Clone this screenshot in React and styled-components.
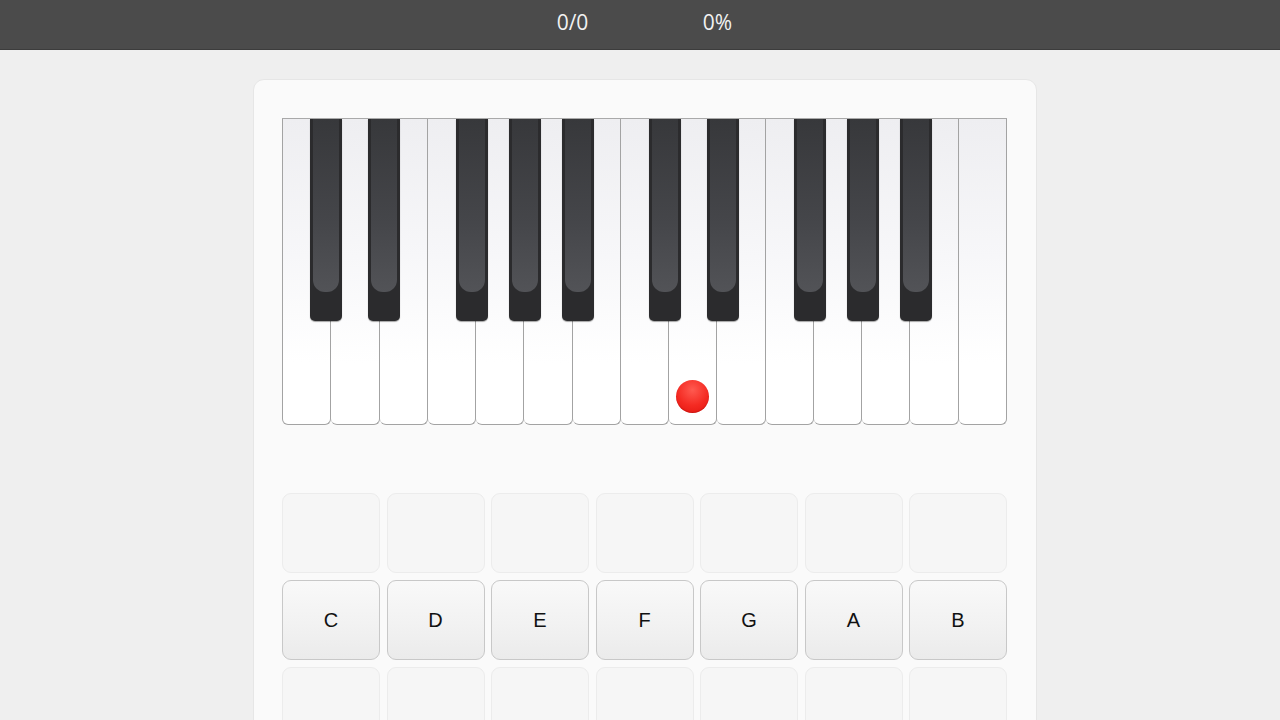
import React from "react";
import styled, { createGlobalStyle } from "styled-components";

const GlobalStyle = createGlobalStyle`
    html, body {
        margin: 0;
        padding: 0;
        background: #efefef;
        font-family: "Open Sans", "Liberation Sans", sans-serif;
        overflow: hidden;
    }
`;

const Screen = styled.div`
    height: 720px;
    overflow: hidden;
`;

const TopBar = styled.div`
    height: 50px;
    background: #4b4b4b;
    border-bottom: 1px solid #3c3c3c;
    display: flex;
    justify-content: center;
    align-items: center;
    padding-left: 10px;
    box-sizing: border-box;
`;

const Stat = styled.div`
    width: 145px;
    text-align: center;
    color: #f2f2f2;
    font-size: 21px;
    line-height: 1;
    margin-top: -5px;
`;

const Page = styled.div`
    padding-left: 10px;
    padding-top: 29px;
`;

const Card = styled.div`
    width: 784px;
    margin: 0 auto;
    box-sizing: border-box;
    background: #fafafa;
    border: 1px solid #e6e6e6;
    border-radius: 11px;
    padding: 38px 29px 0 28px;
    height: 700px;
`;

const Piano = styled.div`
    position: relative;
    display: flex;
    height: 307px;
    border-top: 1px solid #a9a9a9;
    box-sizing: border-box;
`;

const WhiteKey = styled.div`
    position: relative;
    flex: 1;
    box-sizing: border-box;
    border: 1px solid #a3a3a3;
    border-top: none;
    border-left-width: ${(p) => (p.$first ? "1px" : "0")};
    border-radius: 0 0 6px 6px;
    background: linear-gradient(to bottom, #eeeef1 0%, #f7f7f9 45%, #ffffff 80%);
`;

const BlackKey = styled.div`
    position: absolute;
    top: 0;
    width: 32px;
    height: 202px;
    margin-left: -16px;
    box-sizing: border-box;
    background: #2b2b2d;
    border-radius: 0 0 5px 5px;
    box-shadow: 0 1px 1px rgba(0, 0, 0, 0.35);
    padding: 0 3px;
    z-index: 2;
`;

const BlackFace = styled.div`
    height: 173px;
    border-radius: 0 0 12px 12px;
    background: linear-gradient(to bottom, #37383b 0%, #45464a 60%, #525357 100%);
`;

const Dot = styled.div`
    position: absolute;
    left: 50%;
    bottom: 11px;
    width: 33px;
    height: 33px;
    margin-left: -17px;
    border-radius: 50%;
    background: radial-gradient(circle at 50% 30%, #ff5a50 0%, #f42a22 55%, #e2140e 100%);
    box-shadow: inset 0 -1px 1px rgba(150, 0, 0, 0.35);
`;

const Buttons = styled.div`
    display: grid;
    grid-template-columns: repeat(7, 1fr);
    column-gap: 6.5px;
    row-gap: 7px;
    margin-top: 68px;
`;

const NoteButton = styled.div`
    height: 80px;
    box-sizing: border-box;
    border-radius: 9px;
    display: flex;
    align-items: center;
    justify-content: center;
    font-family: "Liberation Sans", Arial, sans-serif;
    font-size: 20px;
    color: #111;
    border: 1px solid ${(p) => (p.$ghost ? "#ececec" : "#c8c8c8")};
    background: ${(p) =>
        p.$ghost
            ? "#f6f6f6"
            : "linear-gradient(to bottom, #f9f9f9 0%, #f1f1f1 60%, #ebebeb 100%)"};
`;

const whiteCount = 15;
const blackKeys = [
    { at: 1, off: -4 },
    { at: 2, off: 5 },
    { at: 4, off: -3 },
    { at: 5, off: 1 },
    { at: 6, off: 6 },
    { at: 8, off: -4 },
    { at: 9, off: 6 },
    { at: 11, off: -4 },
    { at: 12, off: 1 },
    { at: 13, off: 6 },
];
const notes = ["C", "D", "E", "F", "G", "A", "B"];

export default function App() {
    return (
        <Screen>
            <GlobalStyle />
            <TopBar>
                <Stat>0/0</Stat>
                <Stat>0%</Stat>
            </TopBar>
            <Page>
                <Card>
                    <Piano>
                        {Array.from({ length: whiteCount }).map((_, i) => (
                            <WhiteKey key={i} $first={i === 0}>
                                {i === 8 && <Dot />}
                            </WhiteKey>
                        ))}
                        {blackKeys.map((b) => (
                            <BlackKey
                                key={b.at}
                                style={{
                                    left: `calc(${(b.at / whiteCount) * 100}% + ${b.off}px)`,
                                }}
                            >
                                <BlackFace />
                            </BlackKey>
                        ))}
                    </Piano>
                    <Buttons>
                        {notes.map((n) => (
                            <NoteButton key={"g" + n} $ghost />
                        ))}
                        {notes.map((n) => (
                            <NoteButton key={n}>{n}</NoteButton>
                        ))}
                        {notes.map((n) => (
                            <NoteButton key={"h" + n} $ghost />
                        ))}
                    </Buttons>
                </Card>
            </Page>
        </Screen>
    );
}
